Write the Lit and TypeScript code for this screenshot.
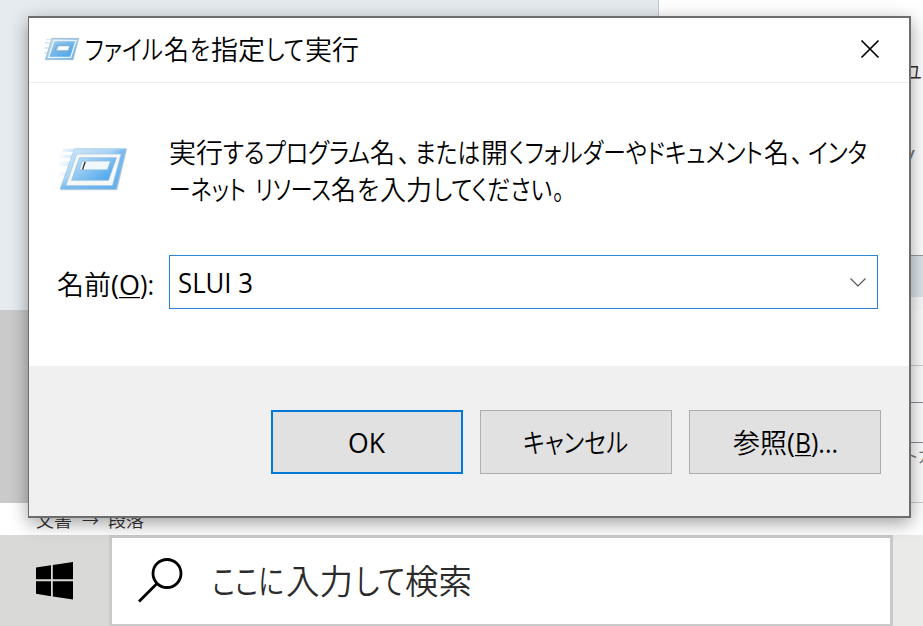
import { LitElement, html, svg, css } from "lit";
import { customElement, property } from "lit/decorators.js";

// One run of glyphs: text, left edge, advance width, underlined
type Run = [string, number, number, boolean?];

@customElement("fitted-text")
class FittedText extends LitElement {
  @property({ attribute: false }) runs: Run[] = [];
  @property({ type: Number }) width = 0;
  @property({ type: Number }) height = 38;
  @property({ type: Number }) baseline = 28;
  @property({ type: Number }) size = 27;

  static styles = css`
    :host { display: block; flex: none; }
    svg { display: block; overflow: visible; }
    text {
      font-family: "Open Sans", "Noto Sans CJK JP", sans-serif;
      font-weight: 350;
      font-feature-settings: "palt";
      fill: currentColor;
      white-space: pre;
    }
    .latin { font-weight: 400; }
  `;

  render() {
    return html`<svg width=${this.width} height=${this.height} font-size=${this.size}>
      ${this.runs.map(
        ([t, x, w, key]) => svg`<text class=${t.charCodeAt(0) < 128 ? "latin" : ""} x=${x} y=${this.baseline}
          textLength=${w} lengthAdjust="spacingAndGlyphs">${t}</text>
          ${key ? svg`<rect x=${x} y=${this.baseline + 2} width=${w} height="1.2" fill="currentColor" />` : ""}`
      )}
    </svg>`;
  }
}

@customElement("run-icon")
class RunIcon extends LitElement {
  static styles = css`
    :host { display: block; flex: none; }
    svg { display: block; width: 100%; height: 100%; }
  `;
  render() {
    return html`<svg viewBox="50 50 220 140" preserveAspectRatio="none">
      <defs>
        <linearGradient id="frame" x1="0" y1="0" x2="1" y2="1">
          <stop offset="0" stop-color="#d4eafa" /><stop offset=".42" stop-color="#a9d3f4" />
          <stop offset=".5" stop-color="#7cbbee" /><stop offset="1" stop-color="#5dabea" />
        </linearGradient>
        <linearGradient id="panel" x1="0" y1="0" x2="1" y2=".7">
          <stop offset="0" stop-color="#c2e0f7" /><stop offset=".55" stop-color="#85c2f0" />
          <stop offset="1" stop-color="#50a8ee" />
        </linearGradient>
        <linearGradient id="trail" x1="0" x2="1">
          <stop offset="0" stop-color="#8fc4ee" stop-opacity="0" /><stop offset="1" stop-color="#9fcdf2" />
        </linearGradient>
      </defs>
      <path d="M68 58h40l-3 10H68zM60 76h40l-3 10H60zM54 96h40l-4 14H54zM54 128h28l-4 12H54zM54 158h18l-5 12H54z"
        fill="url(#trail)" opacity=".5" />
      <path d="M108 60H264L235 182H64Z" fill="#c5c5c5" opacity=".7" />
      <path d="M106 58H262L232 179H62Z" fill="url(#frame)" stroke="#9cc6e6" stroke-width="2" />
      <path d="M113 74H246L220 168H80Z" fill="#f6f7f7" stroke="#a4c8e3" stroke-width="2" />
      <path d="M121 85H232L208 152H97Z" fill="url(#panel)" stroke="#86b8df" stroke-width="2" />
      <path d="M129 95H214L205 121H121Z" fill="#f1f8fc" stroke="#8cbce0" stroke-width="2" />
      <path d="M138 97L130 120" stroke="#333" stroke-width="4" />
    </svg>`;
  }
}

// Title bar size of the same icon, with a centred slot and no caret
@customElement("run-icon-small")
class RunIconSmall extends LitElement {
  static styles = css`
    :host { display: block; flex: none; }
    svg { display: block; width: 100%; height: 100%; }
  `;
  render() {
    return html`<svg viewBox="0 0 111 75">
      <defs>
        <linearGradient id="f" x1="0" y1="0" x2="1" y2="1">
          <stop offset="0" stop-color="#d3e6f4" /><stop offset="1" stop-color="#62b0ec" />
        </linearGradient>
        <linearGradient id="p" x1="0" y1="0" x2="1" y2="1">
          <stop offset="0" stop-color="#a3cdec" /><stop offset="1" stop-color="#3fa0ee" />
        </linearGradient>
      </defs>
      <path d="M6 5H24V10H6zM3 15H20V20H3zM1 30H16V36H1zM1 45H12V51H1z" fill="#bcdcf3" opacity=".6" />
      <path d="M24 4H104L87 68H4Z" fill="url(#f)" stroke="#a3b9c8" stroke-width="2.5" />
      <path d="M30 11H96L80 61H14Z" fill="url(#p)" stroke="#e9f3fa" stroke-width="4" />
      <path d="M38 25H80L73 44H33Z" fill="#9cc3e2" stroke="#6c9fc9" stroke-width="2" />
      <path d="M44 28H76L71 39H40Z" fill="#f6fbff" />
    </svg>`;
  }
}

@customElement("app-root")
class AppRoot extends LitElement {
  static styles = css`
    :host {
      display: block; position: relative; width: 923px; height: 626px;
      overflow: hidden; background: #fff; color: #000;
    }
    * { box-sizing: border-box; }
    .desk { display: grid; grid-template-rows: 310px 192px 33px 91px; height: 626px; }
    .top { display: grid; grid-template-columns: 659px 1fr; }
    .pane { background: #e6ebef; border-right: 1px solid #c3c8cc; }
    .side { display: grid; grid-template-rows: 256px 41px 1fr; }
    .sheet { border-bottom: 1px solid #999; background: #fff; }
    .band { background: #dce4ea; }
    .pale { background: #fafafa; }
    .mid { display: grid; grid-template-columns: 659px 1fr; }
    .grey { background: #cacaca; }
    .rules { display: grid; grid-template-rows: 56px 37px 40px 60px; background: #fcfcfc; }
    .rules div { border-bottom: 1px solid #868a91; }
    .rules .soft { border-color: #ccc; }
    .taskbar { display: grid; grid-template-columns: 109px 784px 1fr; background: #eaeae8; }
    .start { background: #d9d9d7; padding: 27px 0 0 36px; }
    .search {
      display: flex; background: #fff; border: 3px solid #cacaca; border-bottom-width: 2px;
      color: #2b2b2b;
    }
    .glass { flex: none; margin: 17px 0 0 24px; }
    .query { margin: 20px 0 0 27px; }
    .peek { position: absolute; color: #333; }
    .crumbs { left: 36px; top: 508px; }
    .edge1 { left: 900px; top: 58px; }
    .edge2 { left: 900px; top: 140px; color: #777; }
    .edge3 { left: 900px; top: 445px; color: #777; }
    .dialog {
      position: absolute; left: 28px; top: 16px; width: 883px; height: 502px;
      border: 2px solid #6b6d6f; border-left-width: 1.5px;
      background: #fff; box-shadow: 0 5px 17px rgba(0, 0, 0, .38);
      display: grid; grid-template-rows: 65px 1fr 150px;
    }
    .title { display: flex; border-bottom: 1px solid #ececec; }
    .small { width: 37px; height: 25px; margin: 19px 4px 0 15px; }
    .caption { margin-top: 14px; }
    .close { margin: 21px 29px 0 auto; }
    .body { padding: 49px 0 0 28px; }
    .message { display: flex; height: 123px; }
    .big { width: 73px; height: 47px; margin: 14px 40px 0 -1px; }
    .field { display: flex; }
    .label { margin-top: 9px; }
    .combo {
      display: flex; width: 709px; height: 54px; margin-left: 13px;
      border: 1px solid #2b86d3; padding: 8px 10px 0 9px;
    }
    .arrow { margin: 13px 0 0 auto; }
    .footer {
      display: flex; justify-content: flex-end; gap: 17px;
      background: #f0f0f0; padding: 44px 28px 0 0;
    }
    .button {
      display: flex; justify-content: center; width: 192px; height: 64px;
      background: #e1e1e1; border: 1px solid #adadad; padding-top: 13px;
    }
    .default { border: 2px solid #0078d7; padding-top: 12px; }
  `;

  render() {
    return html`
      <div class="desk">
        <div class="top">
          <div class="pane"></div>
          <div class="side">
            <div class="sheet"></div><div class="band"></div><div class="pale"></div>
          </div>
        </div>
        <div class="mid">
          <div class="grey"></div>
          <div class="rules">
            <div class="soft"></div><div></div><div></div><div class="soft"></div>
          </div>
        </div>
        <div></div>
        <div class="taskbar">
          <div class="start">
            <svg width="37" height="38" viewBox="0 0 37 38">
              <path d="M0 5.5L15 3.2V17.2H0ZM16.8 2.9L37 0V17.2H16.8ZM0 19.2H15V34.2L0 31.8ZM16.8 19.2H37V37.5L16.8 34.5Z" />
            </svg>
          </div>
          <div class="search">
            <svg class="glass" width="50" height="50" viewBox="0 0 50 50" fill="none" stroke="#000" stroke-width="2.8">
              <circle cx="31" cy="18.5" r="14" /><path d="M21 28.6L3 46.5" />
            </svg>
            <fitted-text class="query" .width=${270} .height=${50} .baseline=${36} .size=${34}
              .runs=${[["ここに", -1, 72], ["入力", 73, 67], ["して", 142, 50], ["検索", 192, 67]] as Run[]}></fitted-text>
          </div>
          <div></div>
        </div>
      </div>

      <fitted-text class="peek crumbs" .width=${120} .height=${24} .baseline=${19} .size=${18}
        .runs=${[["文書", 0, 36], ["→", 46, 17], ["段落", 72, 36]] as Run[]}></fitted-text>
      <fitted-text class="peek edge1" .width=${23} .height=${30} .baseline=${22} .size=${20}
        .runs=${[["ユ", 4, 18]] as Run[]}></fitted-text>
      <fitted-text class="peek edge2" .width=${23} .height=${30} .baseline=${26} .size=${22}
        .runs=${[["/", 6, 9]] as Run[]}></fitted-text>
      <fitted-text class="peek edge3" .width=${23} .height=${30} .baseline=${18} .size=${18}
        .runs=${[["トカ", 4, 30]] as Run[]}></fitted-text>

      <div class="dialog">
        <div class="title">
          <run-icon-small class="small"></run-icon-small>
          <fitted-text class="caption" .width=${280} .baseline=${28}
            .runs=${[["ファイル", 0, 78], ["名", 79, 25], ["を", 105, 20], ["指定", 126, 54],
              ["して", 181, 38], ["実行", 220, 54]] as Run[]}></fitted-text>
          <svg class="close" width="20" height="20" viewBox="0 0 20 20" stroke="#000" stroke-width="1.7">
            <path d="M1.5 1.5L18.5 18.5M18.5 1.5L1.5 18.5" />
          </svg>
        </div>
        <div class="body">
          <div class="message">
            <run-icon class="big"></run-icon>
            <div>
              <fitted-text .width=${700} .baseline=${31}
                .runs=${[["実行", 0, 54], ["するプログラム", 54, 147], ["名", 201, 25], ["、", 229, 12],
                  ["または", 246, 65], ["開", 312, 27], ["くフォルダーやドキュメント", 340, 254],
                  ["名", 595, 25], ["、", 622, 12], ["インタ", 639, 59]] as Run[]}></fitted-text>
              <fitted-text .width=${700} .baseline=${30}
                .runs=${[["ーネット", 0, 77], ["リソース", 86, 76], ["名", 162, 25], ["を", 188, 22],
                  ["入力", 211, 52], ["してください", 264, 119], ["。", 384, 11]] as Run[]}></fitted-text>
            </div>
          </div>
          <div class="field">
            <fitted-text class="label" .width=${99} .baseline=${31}
              .runs=${[["名前", 0, 54], ["(", 54, 8], ["O", 62, 21, true], ["):", 83, 14]] as Run[]}></fitted-text>
            <div class="combo">
              <fitted-text .width=${80} .baseline=${29} .runs=${[["SLUI 3", -1, 75]] as Run[]}></fitted-text>
              <svg class="arrow" width="18" height="12" viewBox="0 0 18 12" fill="none" stroke="#555" stroke-width="1.2">
                <path d="M1.5 1.5L9 9L16.5 1.5" />
              </svg>
            </div>
          </div>
        </div>
        <div class="footer">
          <div class="button default">
            <fitted-text .width=${38} .baseline=${29} .runs=${[["OK", 0, 37]] as Run[]}></fitted-text>
          </div>
          <div class="button">
            <fitted-text .width=${106} .baseline=${29} .runs=${[["キャンセル", 0, 105]] as Run[]}></fitted-text>
          </div>
          <div class="button">
            <fitted-text .width=${105} .baseline=${29}
              .runs=${[["参照", 0, 54], ["(", 54, 8], ["B", 62, 16, true], [")...", 78, 27]] as Run[]}></fitted-text>
          </div>
        </div>
      </div>
    `;
  }
}
